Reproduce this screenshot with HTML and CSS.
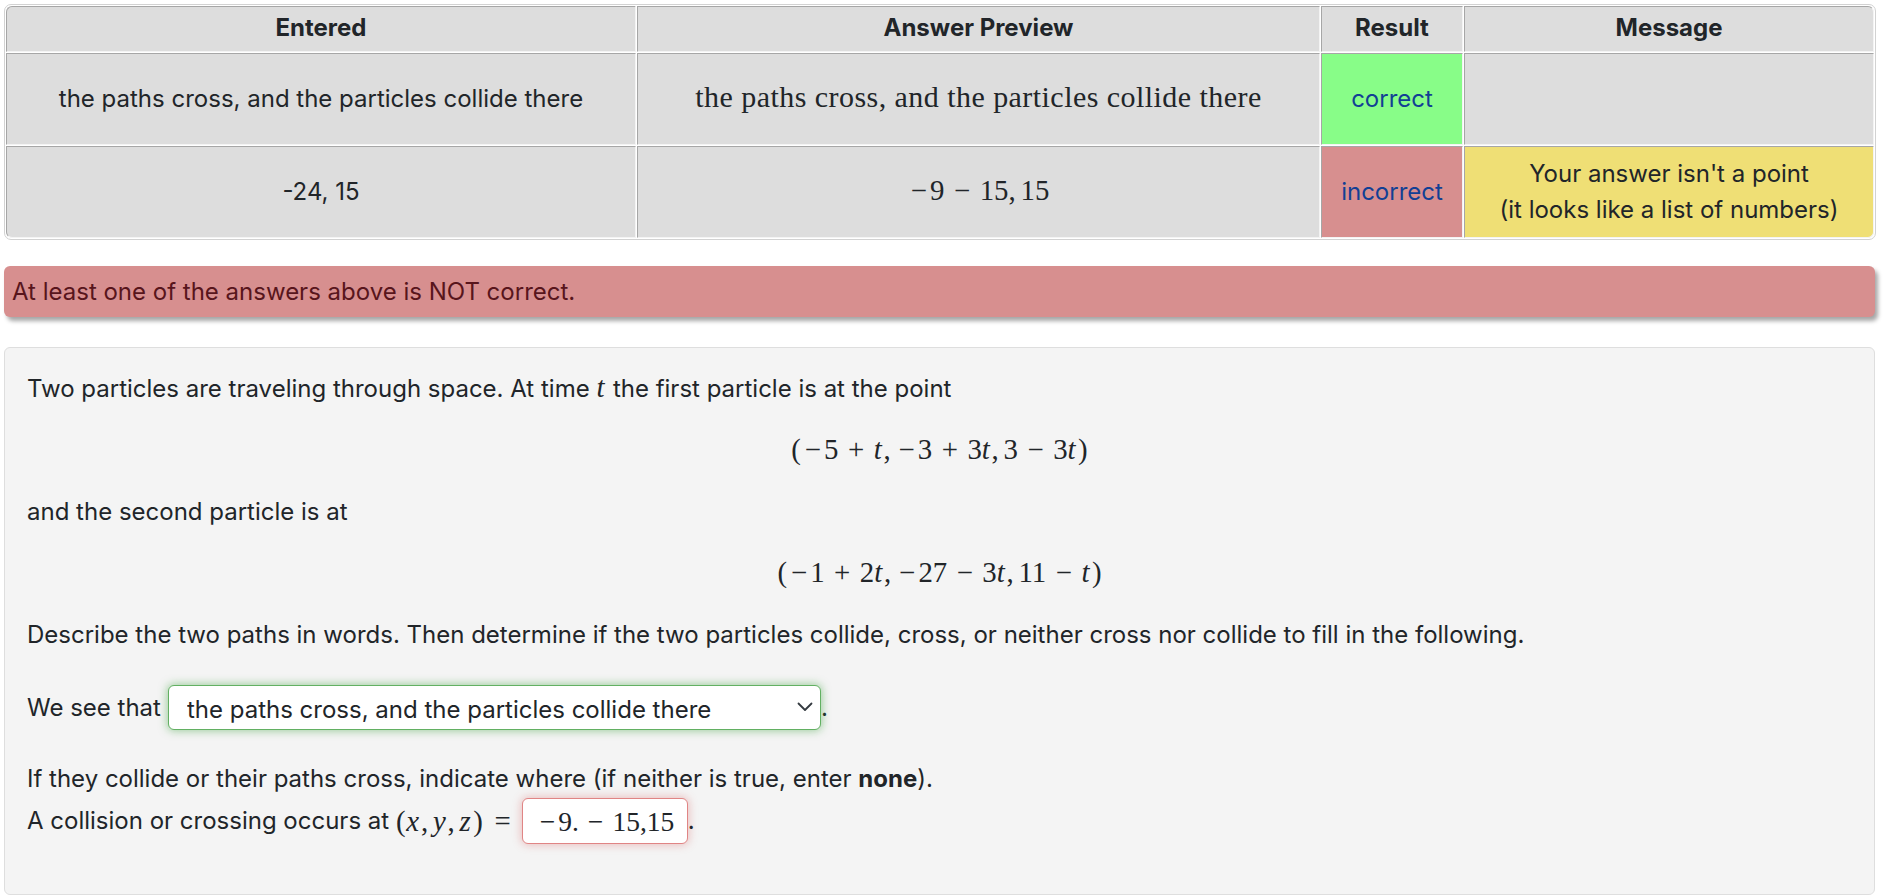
FILE: index.html
```html
<!DOCTYPE html>
<html lang="en">
<head>
<meta charset="utf-8">
<title>Attempt results</title>
<link rel="stylesheet" href="styles.css">
</head>
<body>
<div class="page">
  <table class="results">
    <colgroup>
      <col class="c-entered"><col class="c-preview"><col class="c-result"><col class="c-message">
    </colgroup>
    <thead>
      <tr><th>Entered</th><th>Answer Preview</th><th>Result</th><th>Message</th></tr>
    </thead>
    <tbody>
      <tr>
        <td>the paths cross, and the particles collide there</td>
        <td><span class="math mtext">the paths cross, and the particles collide there</span></td>
        <td class="ok">correct</td>
        <td></td>
      </tr>
      <tr>
        <td>-24, 15</td>
        <td><span class="math"><span class="un">−</span>9<span class="bin">−</span>15<span class="pc">,</span>15</span></td>
        <td class="bad">incorrect</td>
        <td class="warn">Your answer isn't a point<br>(it looks like a list of numbers)</td>
      </tr>
    </tbody>
  </table>

  <div class="alert">At least one of the answers above is NOT correct.</div>

  <div class="problem">
    <p>Two particles are traveling through space. At time <span class="math"><i class="mi">t</i></span> the first particle is at the point</p>
    <div class="display"><span class="math"><span class="ps">(</span><span class="un">−</span>5<span class="bin">+</span><i class="mi">t</i><span class="pc">,</span><span class="un">−</span>3<span class="bin">+</span>3<i class="mi">t</i><span class="pc">,</span>3<span class="bin">−</span>3<i class="mi">t</i><span class="ps">)</span></span></div>
    <p>and the second particle is at</p>
    <div class="display"><span class="math"><span class="ps">(</span><span class="un">−</span>1<span class="bin">+</span>2<i class="mi">t</i><span class="pc">,</span><span class="un">−</span>27<span class="bin">−</span>3<i class="mi">t</i><span class="pc">,</span>11<span class="bin">−</span><i class="mi">t</i><span class="ps">)</span></span></div>
    <p>Describe the two paths in words. Then determine if the two particles collide, cross, or neither cross nor collide to fill in the following.</p>
    <div class="line select-line">
      <span>We see that</span>
      <span class="select-wrap">
        <select class="select">
          <option>the paths cross, and the particles collide there</option>
        </select>
        <svg class="chevron" width="16" height="10" viewBox="0 0 16 10"><path d="M1.5 1.5 L8 8 L14.5 1.5" fill="none" stroke="#343a40" stroke-width="1.8" stroke-linecap="round" stroke-linejoin="round"/></svg>
      </span>
      <span>.</span>
    </div>
    <p class="ask">If they collide or their paths cross, indicate where (if neither is true, enter <b>none</b>).</p>
    <div class="line answer-line">
      <span>A collision or crossing occurs at</span>
      <span class="math inline-eq"><span class="ps">(</span><i class="mi">x</i><span class="pc">,</span><i class="mi">y</i><span class="pc">,</span><i class="mi">z</i><span class="ps">)</span><span class="rel">=</span></span>
      <span class="answer"><span class="math"><span class="un">−</span>9.<span class="bin">−</span>15,15</span></span>
      <span>.</span>
    </div>
  </div>
</div>
</body>
</html>
```
FILE: styles.css
```css
* { box-sizing: border-box; }

html, body {
  margin: 0;
  background: #ffffff;
}

body {
  font-family: Inter, "Noto Sans", "Liberation Sans", sans-serif;
  font-size: 24px;
  line-height: 1.5;
  color: #212529;
}

.page {
  width: 1871px;
  margin: 4px 0 0 4px;
}

/* ---------- results table ---------- */
.results {
  width: 1870px;
  table-layout: fixed;
  border-collapse: separate;
  border-spacing: 1px;
  border: 1px solid #d2d2d2;
  border-radius: 7px;
  margin: 0 0 26px 0;
}

.c-entered { width: 630px; }
.c-preview { width: 683px; }
.c-result { width: 142px; }
.c-message { width: 410px; }

.results th,
.results td {
  background: #dddddd;
  text-align: center;
  vertical-align: middle;
  border: 1px solid;
  border-color: #a6a6a6 #f3f3f3 #f3f3f3 #a6a6a6;
}

.results th {
  font-weight: 700;
  padding: 3px 10px 5px;
  line-height: 36px;
}

.results td {
  padding: 9px 10px;
  height: 92px;
  line-height: 36px;
}

.results thead th:first-child { border-top-left-radius: 6px; }
.results thead th:last-child { border-top-right-radius: 6px; }
.results tbody tr:last-child td:first-child { border-bottom-left-radius: 6px; }
.results tbody tr:last-child td:last-child { border-bottom-right-radius: 6px; }

.results td.ok { background: #88fd88; color: #123f94; }
.results td.bad { background: #d78f8f; color: #123f94; }
.results td.warn { background: #efdf75; }

/* ---------- math ---------- */
.math {
  font-family: "Liberation Serif", "Times New Roman", serif;
  font-size: 28.8px;
  line-height: 1;
  white-space: nowrap;
  color: #212529;
}

.mtext {
  font-size: 30px;
  letter-spacing: 0.45px;
}

.mi { font-style: italic; padding-right: 0.06em; }

.un,
.bin,
.rel {
  display: inline-block;
  width: 0.778em;
  text-align: center;
}

.bin { margin: 0 0.222em; }
.rel { margin: 0 0.1em 0 0.278em; }
.pc { margin-right: 0.167em; }

.ps {
  display: inline-block;
  width: 0.389em;
  text-align: center;
}

/* ---------- alert ---------- */
.alert {
  background: #d78f8f;
  color: #58151c;
  border-radius: 6px;
  padding: 8px 8px 7px;
  line-height: 36px;
  box-shadow: 3px 4px 4px rgba(0, 0, 0, 0.35);
  margin-bottom: 30px;
}

/* ---------- problem ---------- */
.problem {
  background: #f4f4f4;
  border: 1px solid #dedede;
  border-radius: 6px;
  padding: 23px 22px 50px 22px;
}

.problem p {
  margin: 0;
}

.display {
  text-align: center;
  margin: 24px 0;
  height: 39px;
  line-height: 39px;
}

.line {
  display: flex;
  align-items: center;
}

.select-line {
  margin-top: 32px;
  height: 45px;
}

.select-wrap {
  position: relative;
  display: inline-block;
  margin-left: 7px;
  height: 45px;
}

.select {
  appearance: none;
  -webkit-appearance: none;
  display: block;
  width: 653px;
  height: 45px;
  font-family: inherit;
  font-size: 24px;
  color: #212529;
  background: #ffffff;
  border: 1px solid #62b062;
  border-radius: 6px;
  padding: 3px 40px 0 18px;
  box-shadow: 0 0 8px 1px rgba(70, 165, 70, 0.5);
  outline: none;
}

.chevron {
  position: absolute;
  right: 8px;
  top: 17px;
  pointer-events: none;
}

.ask {
  margin-top: 31px !important;
}

.answer-line {
  height: 46px;
  margin-top: 1px;
}

.inline-eq {
  margin-left: 6px;
}

.answer {
  display: inline-flex;
  align-items: center;
  height: 46px;
  width: 166px;
  margin-left: 5px;
  padding: 2px 14px 0 14px;
  background: #ffffff;
  border: 1px solid #e08585;
  border-radius: 6px;
  box-shadow: 0 0 8px 1px rgba(215, 90, 90, 0.35);
}

.answer .math {
  font-size: 27.5px;
}
```
